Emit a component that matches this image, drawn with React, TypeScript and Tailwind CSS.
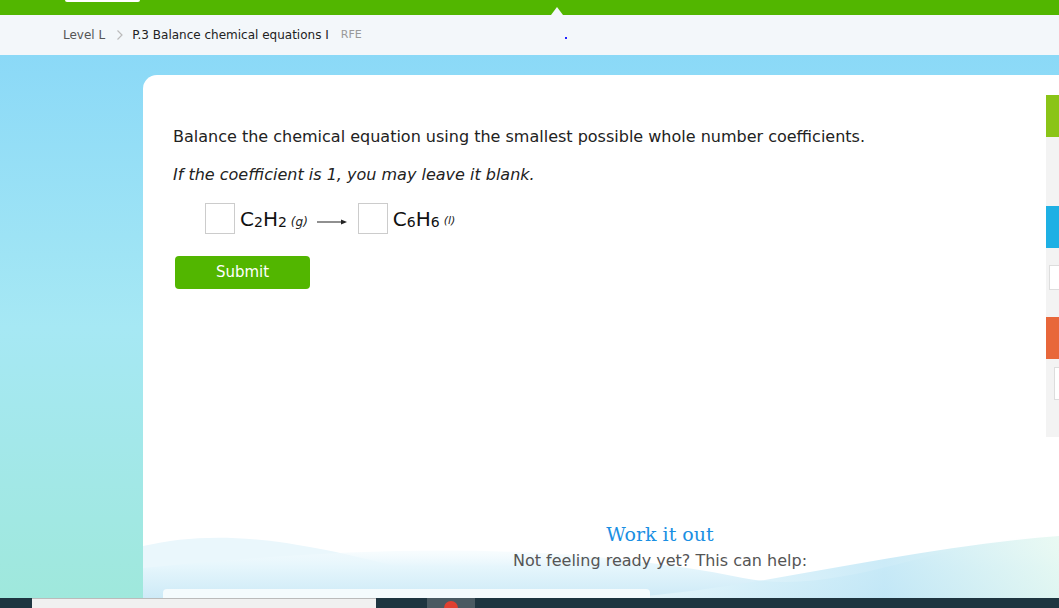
export default function App() {
  const sans = { fontFamily: '"DejaVu Sans", Verdana, sans-serif' };

  return (
    <div className="h-[608px] w-full overflow-hidden flex flex-col bg-white" style={sans}>
      {/* top green bar */}
      <div className="h-[15px] bg-[#52b600] relative shrink-0">
        <div className="absolute left-[65px] top-0 w-[75px] h-[2px] bg-white rounded-b-[3px]" />
        <div className="absolute left-[551px] top-[7px] w-0 h-0 border-l-[6px] border-r-[6px] border-b-[8px] border-l-transparent border-r-transparent border-b-[#f3f7fa]" />
      </div>

      {/* breadcrumb */}
      <div className="h-[40px] bg-[#f3f7fa] flex items-center pl-[63px] text-[12px] shrink-0 relative">
        <span className="text-[#555]">Level L</span>
        <svg width="8" height="12" viewBox="0 0 8 12" className="ml-[11px] mr-[8px]">
          <path d="M1.5 1.5 L6 6 L1.5 10.5" fill="none" stroke="#bbb" strokeWidth="1.2" />
        </svg>
        <span className="text-[#222]">P.3 Balance chemical equations I</span>
        <span className="ml-[12px] text-[#999] text-[11px]">RFE</span>
        <span className="absolute left-[565px] top-[22px] w-[2px] h-[2px] bg-[#2222ff]" />
      </div>

      {/* main area */}
      <div className="flex-1 flex pt-[20px] pl-[143px] bg-gradient-to-b from-[#8bd9f7] via-[#a6e8f4] to-[#9fe8dc]">
        <div className="flex-1 flex bg-white rounded-tl-[14px] relative overflow-hidden">
          {/* decorative waves */}
          <svg className="absolute left-0 bottom-0" width="916" height="72" viewBox="0 0 916 72" preserveAspectRatio="none">
            <defs>
              <linearGradient id="wv" x1="0" y1="0" x2="0" y2="1">
                <stop offset="0" stopColor="#ffffff" stopOpacity="0" />
                <stop offset="0.5" stopColor="#e6f6fc" />
                <stop offset="1" stopColor="#cdeaf7" />
              </linearGradient>
              <linearGradient id="wv2" x1="0" y1="0" x2="1" y2="0">
                <stop offset="0" stopColor="#eaf8fc" />
                <stop offset="0.6" stopColor="#bfe6f6" />
                <stop offset="1" stopColor="#e4f8f0" />
              </linearGradient>
            </defs>
            <path d="M0 20 C 80 2, 160 12, 330 62 L 330 72 L 0 72 Z" fill="#eaf7fc" />
            <path d="M0 72 L 0 42 C 200 22, 400 12, 600 52 C 700 72, 800 12, 916 8 L 916 72 Z" fill="url(#wv)" />
            <path d="M480 72 C 620 62, 760 22, 916 10 L 916 72 Z" fill="url(#wv2)" opacity="0.8" />
          </svg>

          <div className="flex-1 flex flex-col relative pl-[30px] pt-[52px]">
            <p className="text-[16px] text-[#222] leading-[20px]">
              Balance the chemical equation using the smallest possible whole number coefficients.
            </p>
            <p className="text-[16px] text-[#222] italic leading-[20px] mt-[18px]">
              If the coefficient is 1, you may leave it blank.
            </p>

            <div className="flex items-center mt-[18px] ml-[32px] h-[31px]">
              <div className="w-[30px] h-[31px] border border-[#cccccc] bg-white" />
              <span className="ml-[5px] text-[20px] text-[#111] leading-none">
                C<span className="text-[14px] relative top-[1px]">2</span>H<span className="text-[14px] relative top-[1px]">2</span>
              </span>
              <span className="ml-[4px] mt-[6px] text-[12px] italic text-[#222]">(g)</span>
              <svg width="30" height="8" viewBox="0 0 30 8" className="ml-[9px] mt-[6px]">
                <line x1="0" y1="4" x2="25" y2="4" stroke="#222" strokeWidth="1.2" />
                <path d="M24 1.5 L30 4 L24 6.5 Z" fill="#222" />
              </svg>
              <div className="ml-[11px] w-[30px] h-[31px] border border-[#cccccc] bg-white" />
              <span className="ml-[5px] text-[20px] text-[#111] leading-none">
                C<span className="text-[14px] relative top-[1px]">6</span>H<span className="text-[14px] relative top-[1px]">6</span>
              </span>
              <span className="ml-[4px] mt-[6px] text-[11px] italic text-[#222]">(l)</span>
            </div>

            <button className="mt-[22px] ml-[2px] w-[135px] h-[33px] bg-[#52b600] rounded-[4px] text-white text-[15px]">
              Submit
            </button>

            <div className="mt-auto flex flex-col items-center pl-[101px]">
              <div className="text-[19px] text-[#1a8fe3] leading-[24px]" style={{ fontFamily: '"DejaVu Serif", serif' }}>
                Work it out
              </div>
              <div className="text-[16px] text-[#555] mt-[5px] leading-[20px]">
                Not feeling ready yet? This can help:
              </div>
            </div>
            <div className="ml-[-10px] mt-[18px] w-[487px] h-[9px] bg-[#f4fbfd] rounded-t-[4px]" />
          </div>

          {/* right sidebar (clipped) */}
          <div className="w-[13px] shrink-0 mt-[20px] h-[342px] bg-[#f3f3f3] flex flex-col relative">
            <div className="h-[42px] bg-[#8ac417]" />
            <div className="h-[69px]" />
            <div className="h-[42px] bg-[#1eb0e4]" />
            <div className="mt-[17px] ml-[3px] h-[25px] bg-white border border-[#dddddd] border-r-0" />
            <div className="h-[27px]" />
            <div className="h-[42px] bg-[#e8673a]" />
            <div className="mt-[8px] ml-[8px] h-[33px] bg-white border border-[#dddddd] border-r-0" />
          </div>
        </div>
      </div>

      {/* taskbar */}
      <div className="h-[10px] bg-[#1e3540] flex shrink-0">
        <div className="ml-[32px] w-[344px] bg-[#f0f0f0] border-t border-[#bbb]" />
        <div className="ml-[51px] w-[48px] bg-[#4a5a62] flex justify-center">
          <div className="w-[14px] h-[14px] rounded-full bg-[#e04030] mt-[3px]" />
        </div>
      </div>
    </div>
  );
}
